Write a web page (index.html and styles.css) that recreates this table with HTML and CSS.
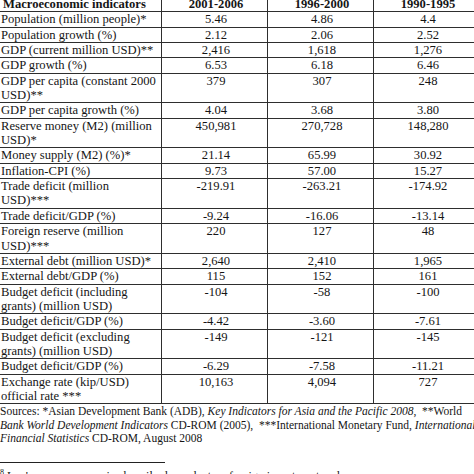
FILE: index.html
```html
<!DOCTYPE html>
<html>
<head>
<meta charset="utf-8">
<link rel="stylesheet" href="styles.css">
</head>
<body>
<div class="page">
<table class="data">
<colgroup><col class="c1"><col class="c2"><col class="c2"><col class="c2"></colgroup>
<tr><th class="hl">Macroeconomic indicators</th><th>2001-2006</th><th>1996-2000</th><th>1990-1995</th></tr>
<tr><td>Population (million people)*</td><td class="num">5.46</td><td class="num">4.86</td><td class="num">4.4</td></tr>
<tr><td>Population growth (%)</td><td class="num">2.12</td><td class="num">2.06</td><td class="num">2.52</td></tr>
<tr><td>GDP (current million USD)**</td><td class="num">2,416</td><td class="num">1,618</td><td class="num">1,276</td></tr>
<tr><td>GDP growth (%)</td><td class="num">6.53</td><td class="num">6.18</td><td class="num">6.46</td></tr>
<tr><td>GDP per capita (constant 2000<br>USD)**</td><td class="num">379</td><td class="num">307</td><td class="num">248</td></tr>
<tr><td>GDP per capita growth (%)</td><td class="num">4.04</td><td class="num">3.68</td><td class="num">3.80</td></tr>
<tr><td>Reserve money (M2) (million<br>USD)*</td><td class="num">450,981</td><td class="num">270,728</td><td class="num">148,280</td></tr>
<tr><td>Money supply (M2) (%)*</td><td class="num">21.14</td><td class="num">65.99</td><td class="num">30.92</td></tr>
<tr><td>Inflation-CPI (%)</td><td class="num">9.73</td><td class="num">57.00</td><td class="num">15.27</td></tr>
<tr><td>Trade deficit (million<br>USD)***</td><td class="num">-219.91</td><td class="num">-263.21</td><td class="num">-174.92</td></tr>
<tr><td>Trade deficit/GDP (%)</td><td class="num">-9.24</td><td class="num">-16.06</td><td class="num">-13.14</td></tr>
<tr><td>Foreign reserve (million<br>USD)***</td><td class="num">220</td><td class="num">127</td><td class="num">48</td></tr>
<tr><td>External debt (million USD)*</td><td class="num">2,640</td><td class="num">2,410</td><td class="num">1,965</td></tr>
<tr><td>External debt/GDP (%)</td><td class="num">115</td><td class="num">152</td><td class="num">161</td></tr>
<tr><td>Budget deficit (including<br>grants) (million USD)</td><td class="num">-104</td><td class="num">-58</td><td class="num">-100</td></tr>
<tr><td>Budget deficit/GDP (%)</td><td class="num">-4.42</td><td class="num">-3.60</td><td class="num">-7.61</td></tr>
<tr><td>Budget deficit (excluding<br>grants) (million USD)</td><td class="num">-149</td><td class="num">-121</td><td class="num">-145</td></tr>
<tr><td>Budget deficit/GDP (%)</td><td class="num">-6.29</td><td class="num">-7.58</td><td class="num">-11.21</td></tr>
<tr><td>Exchange rate (kip/USD)<br>official rate ***</td><td class="num">10,163</td><td class="num">4,094</td><td class="num">727</td></tr>
</table>
<p class="sources">Sources: *Asian Development Bank (ADB), <i>Key Indicators for Asia and the Pacific 2008</i>, &nbsp;**World<br><i>Bank World Development Indicators</i> CD-ROM (2005), &nbsp;***International Monetary Fund, <i>International</i><br><i>Financial Statistics</i> CD-ROM, August 2008</p>
<div class="rule"></div>
<p class="foot"><sup>8</sup> Lao's economy remains heavily dependent on foreign investment and</p>
</div>
</body>
</html>
```
FILE: styles.css
```css
html, body {
  margin: 0;
  padding: 0;
  background: #fff;
}
body {
  color: #151515;
  font-family: "Liberation Serif", "Times New Roman", serif;
  overflow: hidden;
  width: 474px;
  height: 474px;
}
.page {
  margin-top: -4px;
  margin-left: -3px;
  width: 500px;
}
.data {
  border-collapse: collapse;
  table-layout: fixed;
  width: 482px;
}
.c1 { width: 164px; }
.c2 { width: 106px; }
.data th, .data td {
  border: 1px solid #2e2e2e;
  padding: 0 0 0 3px;
  font-size: 12.6px;
  line-height: 14.35px;
  vertical-align: top;
  white-space: nowrap;
  overflow: hidden;
}
.data th {
  font-weight: bold;
  text-align: center;
}
.data th.hl {
  text-align: left;
  padding-left: 5px;
}
.num {
  text-align: center;
}
.sources {
  margin: 1px 0 0 3px;
  font-size: 11.5px;
  line-height: 13.5px;
  white-space: nowrap;
}
.rule {
  margin: 16px 0 0 3px;
  width: 165px;
  border-top: 1px solid #222;
}
.foot {
  margin: 3px 0 0 3px;
  font-size: 12px;
  line-height: 13px;
  white-space: nowrap;
}
.foot sup {
  font-size: 8px;
}
```
